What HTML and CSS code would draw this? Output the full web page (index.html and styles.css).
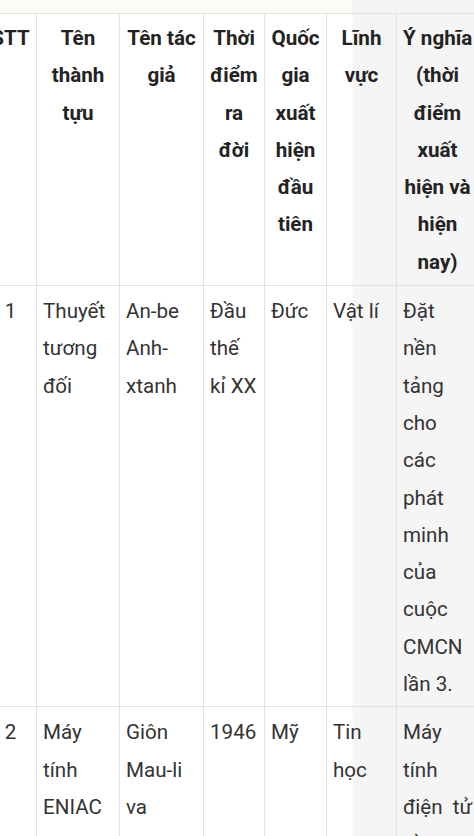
FILE: index.html
```html
<!DOCTYPE html>
<html lang="vi">
<head>
<meta charset="utf-8">
<link rel="stylesheet" href="styles.css">
</head>
<body>
<div class="page">
<table class="grid">
<colgroup>
<col class="c1"><col class="c2"><col class="c3"><col class="c4"><col class="c5"><col class="c6"><col class="c7">
</colgroup>
<thead>
<tr>
<th>STT</th>
<th>Tên<br>thành<br>tựu</th>
<th>Tên tác<br>giả</th>
<th>Thời<br>điểm<br>ra<br>đời</th>
<th>Quốc<br>gia<br>xuất<br>hiện<br>đầu<br>tiên</th>
<th>Lĩnh<br>vực</th>
<th>Ý nghĩa<br>(thời<br>điểm<br>xuất<br>hiện và<br>hiện<br>nay)</th>
</tr>
</thead>
<tbody>
<tr>
<td class="num">1</td>
<td>Thuyết<br>tương<br>đối</td>
<td>An-be<br>Anh-<br>xtanh</td>
<td>Đầu<br>thế<br>kỉ XX</td>
<td>Đức</td>
<td>Vật lí</td>
<td>Đặt<br>nền<br>tảng<br>cho<br>các<br>phát<br>minh<br>của<br>cuộc<br>CMCN<br>lần 3.</td>
</tr>
<tr>
<td class="num">2</td>
<td>Máy<br>tính<br>ENIAC</td>
<td>Giôn<br>Mau-li<br>va</td>
<td>1946</td>
<td>Mỹ</td>
<td>Tin<br>học</td>
<td>Máy<br>tính<br>điện&nbsp; tử<br>đầu<br>tiên</td>
</tr>
</tbody>
</table>
</div>
</body>
</html>
```

FILE: styles.css
```css
html, body {
  margin: 0;
  padding: 0;
}
body {
  background: linear-gradient(to right, #fcfbf5 352px, #f4f4f3 352px);
  overflow: hidden;
  font-family: Roboto, "Noto Sans", "Liberation Sans", sans-serif;
}
.page {
  padding-top: 13px;
}
.grid {
  margin-left: -16px;
  border-collapse: collapse;
  table-layout: fixed;
  width: 494px;
  background: linear-gradient(to right, #ffffff 368px, #f5f5f5 368px);
  font-size: 20.6px;
  line-height: 37.3px;
}
.c1 { width: 52px; }
.c2 { width: 83px; }
.c3 { width: 84px; }
.c4 { width: 61px; }
.c5 { width: 62px; }
.c6 { width: 70px; }
.c7 { width: 82px; }
.grid th,
.grid td {
  border: 1px solid #e2e2e2;
  vertical-align: top;
  white-space: nowrap;
}
.grid th {
  padding: 6px 6px 4px;
  font-weight: 700;
  color: #232323;
  text-align: center;
}
.grid td {
  padding: 7px 6px 3px;
  font-weight: 400;
  color: #333333;
  text-align: left;
}
.grid td.num {
  text-align: center;
}
```
